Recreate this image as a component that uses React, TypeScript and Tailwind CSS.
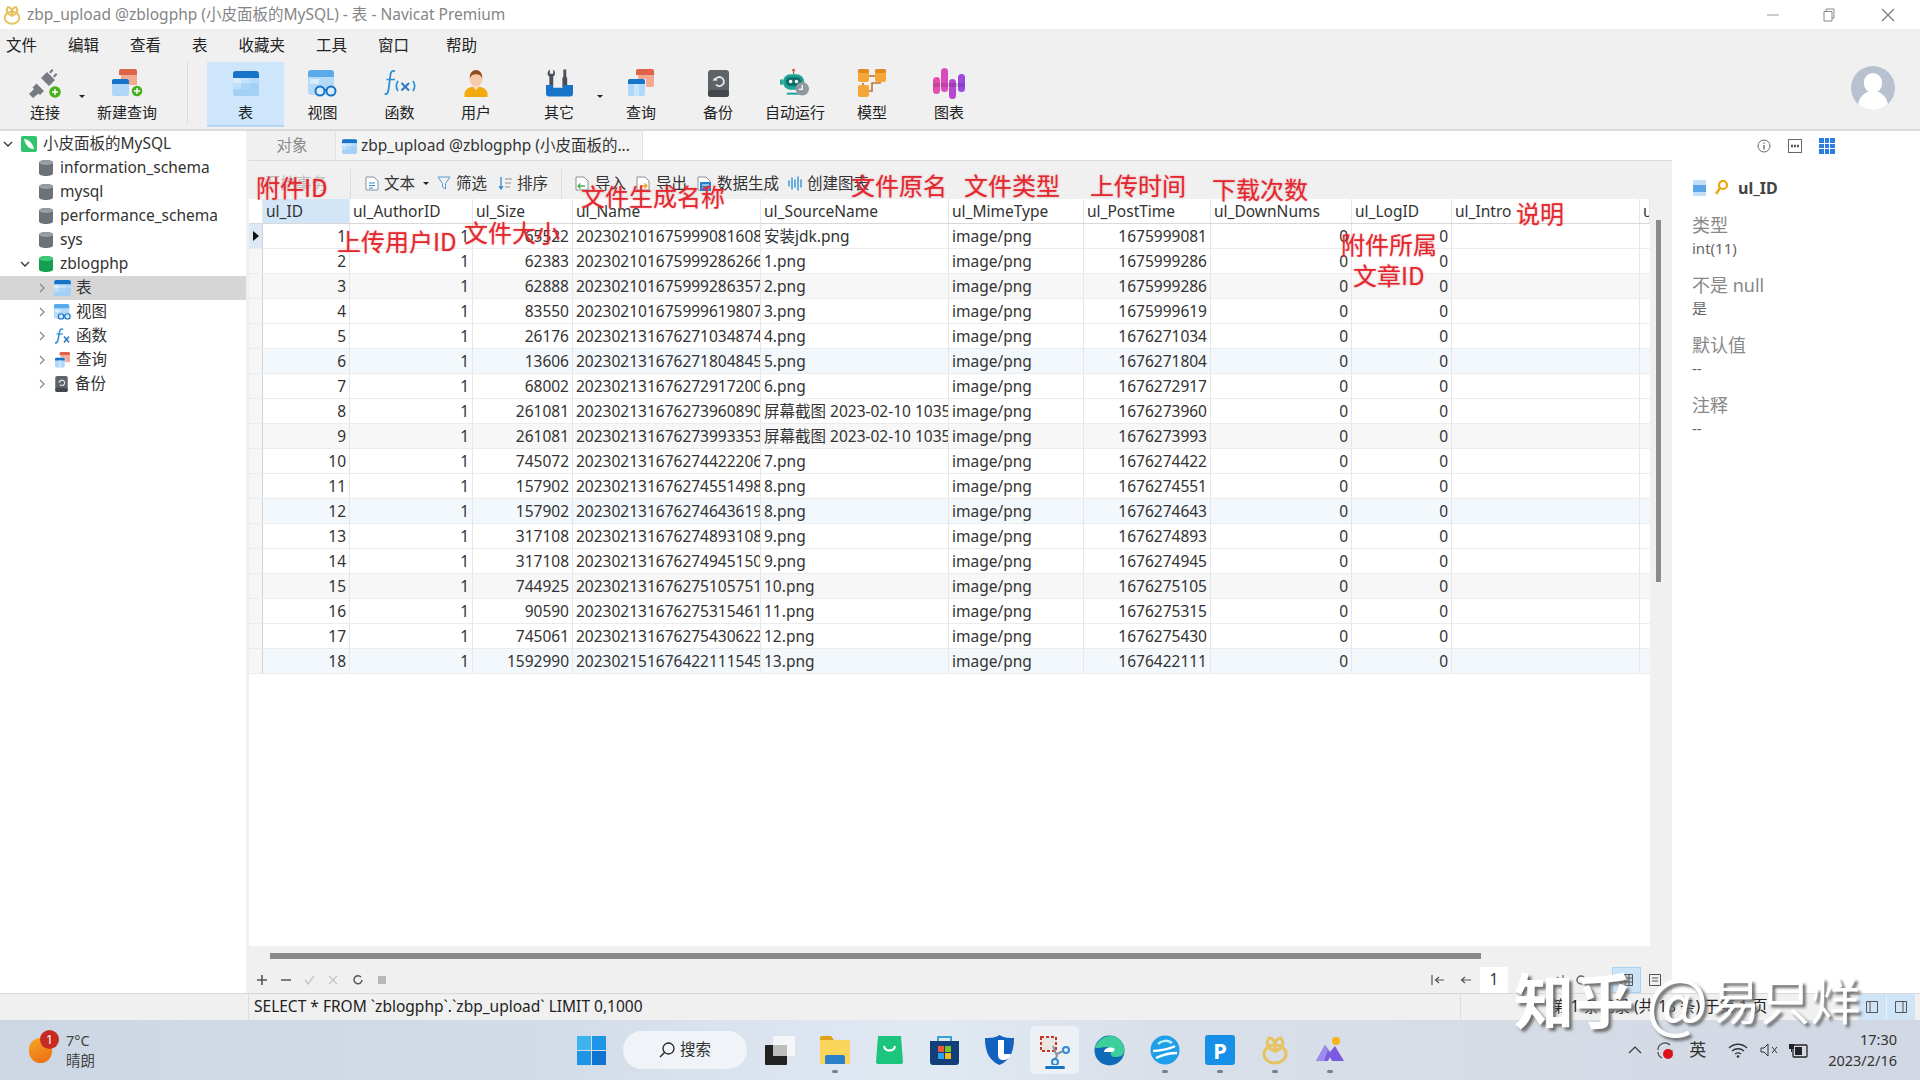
import React from "react";

const sans = "font-['Noto_Sans','Noto_Sans_CJK_SC',sans-serif]";

const Plus = ({ cx, cy, r = 5.5 }: { cx: number; cy: number; r?: number }) => (
  <g>
    <circle cx={cx} cy={cy} r={r} fill="#4caf20" />
    <path d={`M${cx - 3} ${cy}h6M${cx} ${cy - 3}v6`} stroke="#fff" strokeWidth="1.4" />
  </g>
);

const TableIco = ({ className = "w-[26px] h-[25px]" }: { className?: string }) => (
  <svg viewBox="0 0 26 25" className={className}>
    <rect x="0" y="0" width="26" height="25" rx="3" fill="#a9d4f8" />
    <path d="M0 3a3 3 0 0 1 3-3h20a3 3 0 0 1 3 3v4H0z" fill="#1774c9" />
    <rect x="0" y="7" width="8" height="5.5" fill="#d8edfc" />
    <rect x="8" y="7" width="9" height="5.5" fill="#c4e2fa" />
    <rect x="17" y="7" width="9" height="5.5" fill="#b5dbf9" />
    <rect x="0" y="12.5" width="8" height="6" fill="#bfe0fa" />
    <rect x="8" y="12.5" width="9" height="6" fill="#acd6f8" />
    <rect x="17" y="12.5" width="9" height="6" fill="#a2d0f6" />
    <path d="M0 18.5h26V22a3 3 0 0 1-3 3H3a3 3 0 0 1-3-3z" fill="#a2d0f7" />
  </svg>
);

const ViewIco = ({ className = "w-[29px] h-[27px]" }: { className?: string }) => (
  <svg viewBox="0 0 29 27" className={className}>
    <rect x="0" y="0" width="26" height="25" rx="3" fill="#b5daf8" />
    <path d="M0 3a3 3 0 0 1 3-3h20a3 3 0 0 1 3 3v4H0z" fill="#5aa9e9" />
    <rect x="2" y="9" width="9" height="5" fill="#d8edfc" />
    <circle cx="12" cy="21" r="4.5" fill="#d8edfc" stroke="#1774c9" strokeWidth="2" />
    <circle cx="23" cy="21" r="4.5" fill="#d8edfc" stroke="#1774c9" strokeWidth="2" />
    <path d="M16 20h3" stroke="#1774c9" strokeWidth="2" />
  </svg>
);

const QueryIco = ({ className = "w-[26px] h-[28px]" }: { className?: string }) => (
  <svg viewBox="0 0 26 28" className={className}>
    <path d="M8 2a2 2 0 0 1 2-2h14a2 2 0 0 1 2 2v4H8z" fill="#e0624a" />
    <path d="M10 6h16v10a2 2 0 0 1-2 2h-6V10h-8z" fill="#f4a991" />
    <rect x="0" y="10" width="17" height="17" rx="2" fill="#aed7f8" />
    <path d="M0 12a2 2 0 0 1 2-2h13a2 2 0 0 1 2 2v3H0z" fill="#1774c9" />
    <rect x="6" y="15" width="5" height="12" fill="#c7e4fb" />
  </svg>
);

const BackupIco = ({ className = "w-[21px] h-[27px]" }: { className?: string }) => (
  <svg viewBox="0 0 21 27" className={className}>
    <rect width="21" height="27" rx="3" fill="#5e6369" />
    <rect y="20" width="21" height="7" rx="3" fill="#44484d" />
    <path d="M7 10.5a4.5 4.5 0 1 1 1 4" fill="none" stroke="#e8e8e8" strokeWidth="1.8" />
    <path d="M4.5 10.5h5L7 7.5z" fill="#e8e8e8" />
  </svg>
);

const FxIco = () => (
  <svg viewBox="0 0 32 28" className="w-[32px] h-[28px]">
    <path d="M11 2.5c-2.5-1.500-4 0-4.500 3L4.500 21c-.6 3.500-2 4.500-4 4" fill="none" stroke="#2c8fd8" strokeWidth="1.800" />
    <path d="M2.500 10.500H11" stroke="#2c8fd8" strokeWidth="1.500" />
    <path d="M14 12c-2 3-2 7 0 10M29 12c2 3 2 7 0 10" fill="none" stroke="#2c8fd8" strokeWidth="1.700" />
    <path d="M17.500 14l7.500 7.500M25 14l-7.500 7.500" stroke="#2c78c8" strokeWidth="2" />
  </svg>
);

const UserIco = () => (
  <svg viewBox="0 0 24 28" className="w-[24px] h-[27px]">
    <path d="M0 28v-3c0-5 5-8 12-8s12 3 12 8v3z" fill="#f2a90f" />
    <path d="M8 16l4 5 4-5z" fill="#fbe3c4" />
    <ellipse cx="12" cy="9" rx="6.500" ry="8" fill="#f8c9a8" />
    <path d="M5.500 9C5 3 8.500 0 12 0s7 3 6.500 9c-1-3-3-4.500-6.500-4.500S6.500 6 5.500 9z" fill="#8f4a22" />
  </svg>
);

const ToolsIco = () => (
  <svg viewBox="0 0 28 28" className="w-[27px] h-[28px]">
    <path d="M4 0c-3 2-3 6-.5 7.500V19h4V7.500C10 6 10 2 7.500 0v4.500H4z" fill="#4a5058" />
    <path d="M18 0h3v7l1 2v10h-5V9l1-2z" fill="#4a5058" />
    <path d="M0 16h7v3h11v-3h10v9a3 3 0 0 1-3 3H3a3 3 0 0 1-3-3z" fill="#1774c9" />
  </svg>
);

const RobotIco = () => (
  <svg viewBox="0 0 32 30" className="w-[31px] h-[30px]">
    <circle cx="14" cy="1.800" r="1.500" fill="#e0524a" />
    <path d="M14 3v3" stroke="#5a6068" strokeWidth="1.200" />
    <rect x="3" y="6" width="22" height="16" rx="8" fill="#1fa394" />
    <rect x="6" y="9" width="16" height="9" rx="4.500" fill="#0e6f6a" />
    <circle cx="11" cy="13.500" r="1.800" fill="#fff" />
    <circle cx="17" cy="13.500" r="1.800" fill="#fff" />
    <rect x="0" y="11" width="3" height="6" rx="1.500" fill="#1fa394" />
    <path d="M7 25h14v2H7z" fill="#1fa394" />
    <circle cx="23" cy="21" r="7" fill="#8f979f" />
    <path d="M23 17v4.500h-3.500" fill="none" stroke="#fff" strokeWidth="1.300" />
  </svg>
);

const ModelIco = () => (
  <svg viewBox="0 0 28 28" className="w-[28px] h-[28px]">
    <path d="M8 7h11M5 14v6M23 14h-9v8h-5" fill="none" stroke="#b9753a" strokeWidth="1.600" />
    <rect x="0" y="0" width="11" height="13" rx="2" fill="#f5a636" />
    <rect x="17" y="0" width="11" height="13" rx="2" fill="#f5a636" />
    <rect x="0" y="16" width="11" height="12" rx="2" fill="#f5a636" />
    <rect x="0" y="0" width="11" height="4" rx="2" fill="#de8a1e" />
    <rect x="17" y="0" width="11" height="4" rx="2" fill="#de8a1e" />
  </svg>
);

const ChartIco = () => (
  <svg viewBox="0 0 32 31" className="w-[32px] h-[31px]">
    <rect x="0" y="9" width="7" height="17" rx="3.500" fill="#e04fb0" />
    <rect x="8" y="0" width="7" height="24" rx="3.500" fill="#d94bbc" />
    <rect x="16" y="11" width="7" height="20" rx="3.500" fill="#b846cf" />
    <rect x="25" y="6" width="7" height="18" rx="3.500" fill="#9a4ae0" />
    <rect x="0" y="15" width="32" height="4" fill="#000" fillOpacity=".12" />
  </svg>
);

const PlugIco = () => (
  <svg viewBox="0 0 32 30" className="w-[32px] h-[30px]">
    <g fill="#767b82">
      <path d="M0 26l5-5-1.500-1.500 4-4 7.500 7.500-4 4L9.500 25.500 4 30z" />
      <path d="M12 10l6-6 8 8-6 6z" />
      <path d="M20 4l3-3 1.500 1.500-3 3zM24 8l3-3 1.500 1.500-3 3z" />
    </g>
    <Plus cx={26} cy={24} r={5.800} />
  </svg>
);

const NewQueryIco = () => (
  <svg viewBox="0 0 31 28" className="w-[31px] h-[28px]">
    <path d="M7 2a2 2 0 0 1 2-2h14a2 2 0 0 1 2 2v4H7z" fill="#e0624a" />
    <path d="M9 6h16v10h-8V10H9z" fill="#f4a991" />
    <rect x="0" y="10" width="17" height="17" rx="2" fill="#aed7f8" />
    <path d="M0 12a2 2 0 0 1 2-2h13a2 2 0 0 1 2 2v3H0z" fill="#1774c9" />
    <Plus cx={25} cy={22} r={5.300} />
  </svg>
);

type TItem = { label: string; icon: React.ReactNode; cls: string; active?: boolean };

const tools: TItem[] = [
  { label: "连接", icon: <PlugIco />, cls: "ml-[10px] w-[70px]" },
  { label: "新建查询", icon: <NewQueryIco />, cls: "ml-[9px] w-[76px]" },
];
const tools2: TItem[] = [
  { label: "表", icon: <TableIco />, cls: "ml-[19px] w-[77px]", active: true },
  { label: "视图", icon: <ViewIco />, cls: "w-[77px]" },
  { label: "函数", icon: <FxIco />, cls: "w-[77px]" },
  { label: "用户", icon: <UserIco />, cls: "w-[76px]" },
  { label: "其它", icon: <ToolsIco />, cls: "ml-[7px] w-[76px]" },
];
const tools3: TItem[] = [
  { label: "查询", icon: <QueryIco />, cls: "w-[76px]" },
  { label: "备份", icon: <BackupIco />, cls: "ml-[1px] w-[76px]" },
  { label: "自动运行", icon: <RobotIco />, cls: "ml-[1px] w-[76px]" },
  { label: "模型", icon: <ModelIco />, cls: "ml-[1px] w-[76px]" },
  { label: "图表", icon: <ChartIco />, cls: "ml-[1px] w-[76px]" },
];

const Tool = ({ t }: { t: TItem }) => (
  <div className={`${t.cls} h-[65px] flex flex-col items-center shrink-0 ${t.active ? "bg-[#cde6fb] border-b-2 border-[#b5d6f2]" : ""}`}>
    <div className="h-[37px] pt-[5px] flex items-center justify-center">{t.icon}</div>
    <div className="mt-[3px] text-[#222] text-[15px] leading-[20px] whitespace-nowrap">{t.label}</div>
  </div>
);

const Caret = ({ cls }: { cls: string }) => (
  <div className={`${cls} shrink-0 h-[65px] flex items-center justify-center pt-[3px]`}>
    <div className="w-0 h-0 border-l-[3px] border-r-[3px] border-t-[3px] border-l-transparent border-r-transparent border-t-[#222]" />
  </div>
);

const Navicat = ({ className }: { className: string }) => (
  <svg viewBox="0 0 30 30" className={className}>
    <g fill="none" stroke="#e6c35e" strokeWidth="3">
      <ellipse cx="15" cy="19" rx="11" ry="9" />
      <path d="M15 16C8 14 5 9 9 3c4 0 7 4 6 13zM15 16c7-2 10-7 6-13-4 0-7 4-6 13z" />
    </g>
  </svg>
);

type Row = [string, string, string, string, string, string, string, string];
const rows: Row[] = [
  ["1", "65522", "2023021016759990816089", "安装jdk.png", "1675999081", "0", "0", ""],
  ["2", "62383", "2023021016759992862661", "1.png", "1675999286", "0", "0", ""],
  ["3", "62888", "2023021016759992863572", "2.png", "1675999286", "0", "0", ""],
  ["4", "83550", "2023021016759996198073", "3.png", "1675999619", "0", "0", ""],
  ["5", "26176", "2023021316762710348744", "4.png", "1676271034", "0", "0", ""],
  ["6", "13606", "2023021316762718048455", "5.png", "1676271804", "0", "0", ""],
  ["7", "68002", "2023021316762729172006", "6.png", "1676272917", "0", "0", ""],
  ["8", "261081", "2023021316762739608907", "屏幕截图 2023-02-10 103512.png", "1676273960", "0", "0", ""],
  ["9", "261081", "2023021316762739933538", "屏幕截图 2023-02-10 103512.png", "1676273993", "0", "0", ""],
  ["10", "745072", "2023021316762744222069", "7.png", "1676274422", "0", "0", ""],
  ["11", "157902", "2023021316762745514988", "8.png", "1676274551", "0", "0", ""],
  ["12", "157902", "2023021316762746436199", "8.png", "1676274643", "0", "0", ""],
  ["13", "317108", "2023021316762748931089", "9.png", "1676274893", "0", "0", ""],
  ["14", "317108", "2023021316762749451509", "9.png", "1676274945", "0", "0", ""],
  ["15", "744925", "2023021316762751057510", "10.png", "1676275105", "0", "0", ""],
  ["16", "90590", "2023021316762753154611", "11.png", "1676275315", "0", "0", ""],
  ["17", "745061", "2023021316762754306222", "12.png", "1676275430", "0", "0", ""],
  ["18", "1592990", "2023021516764221115453", "13.png", "1676422111", "0", "0", ""],
];

const cell = "shrink-0 overflow-hidden whitespace-nowrap border-r border-[#e6e6e6] leading-[24px] h-full";
const num = "text-right pr-[3px]";
const txt = "pl-[3px]";

const headers: [string, string][] = [
  ["ul_ID", "w-[87px] bg-[#d3e6f7]"],
  ["ul_AuthorID", "w-[123px]"],
  ["ul_Size", "w-[100px]"],
  ["ul_Name", "w-[188px]"],
  ["ul_SourceName", "w-[188px]"],
  ["ul_MimeType", "w-[135px]"],
  ["ul_PostTime", "w-[127px]"],
  ["ul_DownNums", "w-[141px]"],
  ["ul_LogID", "w-[100px]"],
  ["ul_Intro", "w-[188px]"],
  ["ul_", "w-[10px]"],
];

const notes: [string, string][] = [
  ["附件ID", "left-[256px] top-[174px]"],
  ["上传用户ID", "left-[337px] top-[228px]"],
  ["文件大小", "left-[464px] top-[219px]"],
  ["文件生成名称", "left-[581px] top-[183px]"],
  ["文件原名", "left-[851px] top-[172px]"],
  ["文件类型", "left-[964px] top-[172px]"],
  ["上传时间", "left-[1090px] top-[172px]"],
  ["下载次数", "left-[1212px] top-[176px]"],
  ["说明", "left-[1516px] top-[200px]"],
  ["附件所属", "left-[1341px] top-[231px]"],
  ["文章ID", "left-[1353px] top-[262px]"],
];

const Chevron = ({ open, cls }: { open?: boolean; cls: string }) => (
  <svg viewBox="0 0 10 10" className={`${cls} w-[10px] h-[10px] shrink-0`}>
    <path d={open ? "M1 3l4 4 4-4" : "M3 1l4 4-4 4"} fill="none" stroke={open ? "#333" : "#888"} strokeWidth="1.300" />
  </svg>
);

const Db = ({ color }: { color: "g" | "e" }) => (
  <svg viewBox="0 0 14 16" className="w-[14px] h-[16px] shrink-0">
    <path d="M0 2.500C0 1 3 0 7 0s7 1 7 2.500V13.500C14 15 11 16 7 16s-7-1-7-2.500z" fill={color === "g" ? "#6c7278" : "#12a150"} />
    <ellipse cx="7" cy="2.500" rx="7" ry="2.500" fill={color === "g" ? "#999ea3" : "#42c97b"} />
  </svg>
);

const dbRow = "h-6 flex items-center pl-[39px] gap-[7px]";
const childRow = "h-6 flex items-center gap-[5px]";

const SubIcon = ({ kind }: { kind: string }) => {
  const page = <path d="M1 1h8l4 4v9H1z" fill="#fff" stroke="#8a9098" />;
  return (
    <svg viewBox="0 0 14 15" className="w-[14px] h-[15px] shrink-0">
      {kind === "text" && (
        <g>
          {page}
          <path d="M4 7h6M4 9.500h6M4 12h4" stroke="#2c8fd8" />
        </g>
      )}
      {kind === "filter" && <path d="M1 1h12L8.500 7.500V13L5.500 11V7.500z" fill="none" stroke="#5c9ad0" />}
      {kind === "sort" && (
        <g>
          <path d="M3 1v12M1 10l2 3 2-3" fill="none" stroke="#2c8fd8" strokeWidth="1.300" />
          <path d="M7 3h7M7 7h6M7 11h5" stroke="#8a9098" />
        </g>
      )}
      {kind === "in" && (
        <g>
          {page}
          <path d="M10 10H3M5.500 7.500L3 10l2.500 2.500" fill="none" stroke="#4caf50" strokeWidth="1.300" />
        </g>
      )}
      {kind === "out" && (
        <g>
          {page}
          <path d="M4 10h7M8.500 7.500L11 10l-2.500 2.500" fill="none" stroke="#f0a020" strokeWidth="1.300" />
        </g>
      )}
      {kind === "gen" && (
        <g>
          {page}
          <rect x="3" y="6" width="11" height="9" fill="#2b7fd0" />
          <path d="M5 9h7M5 12h7" stroke="#fff" />
        </g>
      )}
      {kind === "chart" && <path d="M1 5v5M4 2v11M7 4v7M10 1v13M13 4v7" stroke="#3a9ad9" strokeWidth="1.500" strokeLinecap="round" />}
    </svg>
  );
};

const Dot = ({ active }: { active?: boolean }) =>
  active ? (
    <span className="absolute bottom-[5px] left-1/2 -translate-x-1/2 w-[20px] h-[3px] rounded-full bg-[#1673c5]" />
  ) : (
    <span className="absolute bottom-[7px] left-1/2 -translate-x-1/2 w-[6px] h-[3px] rounded-full bg-[#77808c]" />
  );

const TaskIcon = ({ cls, dot, children }: { cls: string; dot?: boolean; children: React.ReactNode }) => (
  <div className={`${cls} relative h-full shrink-0 flex items-center justify-center`}>
    {children}
    {dot && <Dot />}
  </div>
);

export default function App() {
  return (
    <div className={`${sans} relative w-[1920px] h-[1080px] overflow-hidden bg-white text-[15.5px] text-[#333] flex flex-col`}>
      {/* title */}
      <div className="h-[29px] flex items-center bg-white shrink-0">
        <Navicat className="ml-[2px] w-[20px] h-[22px]" />
        <span className="ml-[5px] text-[#858585] text-[15.5px] whitespace-nowrap">zbp_upload @zblogphp (小皮面板的MySQL) - 表 - Navicat Premium</span>
        <div className="ml-auto flex items-center">
          <svg viewBox="0 0 12 12" className="w-[12px] h-[12px] mr-[44px]"><path d="M0 6h12" stroke="#999" /></svg>
          <svg viewBox="0 0 12 14" className="w-[12px] h-[14px] mr-[46px]"><path d="M1 3.500h8v9.500H1zM3 3.500V1h8v9H9" fill="none" stroke="#888" /></svg>
          <svg viewBox="0 0 14 14" className="w-[14px] h-[14px] mr-[25px]"><path d="M1 1l12 12M13 1L1 13" stroke="#777" strokeWidth="1.100" /></svg>
        </div>
      </div>
      {/* menu */}
      <div className="h-[31px] pt-[2px] bg-[#f0f0f0] flex items-center pl-[6px] gap-[31px] text-[15.5px] text-[#222] shrink-0">
        <span>文件</span>
        <span>编辑</span>
        <span>查看</span>
        <span>表</span>
        <span>收藏夹</span>
        <span>工具</span>
        <span>窗口</span>
        <span className="ml-[6px]">帮助</span>
      </div>
      {/* ribbon */}
      <div className="h-[71px] pt-[2px] bg-[#f0f0f0] border-b-2 border-[#dadada] flex items-start shrink-0">
        {tools.slice(0, 1).map((t) => <Tool key={t.label} t={t} />)}
        <Caret cls="w-[9px] -ml-[3px] mr-[3px]" />
        <div className="-ml-[9px] flex"><Tool t={tools[1]} /></div>
        <div className="ml-[22px] w-px h-[62px] bg-[#dcdcdc] shrink-0" />
        {tools2.map((t) => <Tool key={t.label} t={t} />)}
        <Caret cls="w-[6px]" />
        {tools3.map((t) => <Tool key={t.label} t={t} />)}
        <div className="ml-auto mr-[25px] mt-[4px] w-[44px] h-[44px] rounded-full bg-[#b7c1cf] overflow-hidden flex flex-col items-center relative">
          <div className="mt-[7px] w-[18px] h-[22px] rounded-full bg-white" />
          <div className="-mt-[2px] w-[30px] h-[20px] rounded-t-full bg-white" />
        </div>
      </div>

      {/* body */}
      <div className="flex-1 min-h-0 flex">
        {/* sidebar */}
        <div className="w-[246px] bg-white text-[#333] pt-[1px] shrink-0">
          <div className="h-6 flex items-center pl-[3px]">
            <Chevron open cls="" />
            <svg viewBox="0 0 16 16" className="ml-[8px] w-[16px] h-[16px]">
              <rect width="16" height="16" rx="2" fill="#2fc36b" />
              <path d="M3 3c4 0 9 4 10 10-5 0-8-3-10-10z" fill="#fff" />
            </svg>
            <span className="ml-[6px]">小皮面板的MySQL</span>
          </div>
          {["information_schema", "mysql", "performance_schema", "sys"].map((n) => (
            <div key={n} className={dbRow}><Db color="g" /><span>{n}</span></div>
          ))}
          <div className="h-6 flex items-center pl-[20px]">
            <Chevron open cls="" />
            <span className="ml-[9px]"><Db color="e" /></span>
            <span className="ml-[7px]">zblogphp</span>
          </div>
          <div className={`${childRow} bg-[#d6d6d6] pl-[37px]`}>
            <Chevron cls="" />
            <span className="ml-[2px] flex"><TableIco className="w-[17px] h-[16px]" /></span>
            <span>表</span>
          </div>
          <div className={`${childRow} pl-[37px]`}>
            <Chevron cls="" />
            <span className="ml-[2px] flex"><ViewIco className="w-[17px] h-[16px]" /></span>
            <span>视图</span>
          </div>
          <div className={`${childRow} pl-[37px]`}>
            <Chevron cls="" />
            <svg viewBox="0 0 17 16" className="ml-[2px] w-[17px] h-[16px]">
              <path d="M9 1.500C7 .5 6 1.500 5.500 4L4 12c-.4 2-1.500 3-3 3" fill="none" stroke="#2c8fd8" strokeWidth="1.500" />
              <path d="M2.500 6H9" stroke="#2c8fd8" strokeWidth="1.200" />
              <path d="M10 8.500l5 6M15 8.500l-5 6" stroke="#2c78c8" strokeWidth="1.500" />
            </svg>
            <span>函数</span>
          </div>
          <div className={`${childRow} pl-[37px]`}>
            <Chevron cls="" />
            <span className="ml-[2px] flex"><QueryIco className="w-[17px] h-[16px]" /></span>
            <span>查询</span>
          </div>
          <div className={`${childRow} pl-[37px]`}>
            <Chevron cls="" />
            <span className="ml-[3px] mr-[2px] flex"><BackupIco className="w-[13px] h-[16px]" /></span>
            <span>备份</span>
          </div>
        </div>

        {/* main */}
        <div className="w-[1426px] shrink-0 bg-[#f0f0f0] flex flex-col pl-[3px]">
          {/* tabs */}
          <div className="h-[30px] bg-white border-b border-[#dcdcdc] flex shrink-0">
            <div className="w-[87px] h-full pt-[1px] bg-[#f0f0f0] text-[#8c8c8c] flex items-center justify-center border-r border-[#e2e2e2]">对象</div>
            <div className="w-[307px] h-full pt-[1px] bg-[#f3f3f3] flex items-center pl-[6px] gap-[4px] whitespace-nowrap border-r border-[#e2e2e2]">
              <TableIco className="w-[15px] h-[15px]" />
              <span>zbp_upload @zblogphp (小皮面板的...</span>
            </div>
          </div>
          {/* subtoolbar */}
          <div className="h-[38px] pt-[7px] flex items-center text-[#333] shrink-0 whitespace-nowrap">
            <div className="w-[101px] pl-[16px] text-[#bdbdbd]">开始事务</div>
            <div className="w-px h-[30px] bg-[#dddddd]" />
            <div className="ml-[14px]"><SubIcon kind="text" /></div><span className="ml-[5px]">文本</span>
            <div className="ml-[8px] w-0 h-0 border-l-[3px] border-r-[3px] border-t-[3px] border-l-transparent border-r-transparent border-t-[#222]" />
            <div className="ml-[8px]"><SubIcon kind="filter" /></div><span className="ml-[5px]">筛选</span>
            <div className="ml-[11px]"><SubIcon kind="sort" /></div><span className="ml-[5px]">排序</span>
            <div className="ml-[13px] w-px h-[30px] bg-[#dddddd]" />
            <div className="ml-[13px]"><SubIcon kind="in" /></div><span className="ml-[6px]">导入</span>
            <div className="ml-[10px]"><SubIcon kind="out" /></div><span className="ml-[6px]">导出</span>
            <div className="ml-[10px]"><SubIcon kind="gen" /></div><span className="ml-[6px]">数据生成</span>
            <div className="ml-[9px]"><SubIcon kind="chart" /></div><span className="ml-[5px]">创建图表</span>
          </div>
          {/* grid + scrollbar */}
          <div className="h-[747px] flex shrink-0">
            <div className="w-[1401px] h-full bg-white overflow-hidden shrink-0">
              <div className="h-6 flex border-b border-[#d9d9d9] box-content">
                <div className="w-[14px] shrink-0 border-r border-[#e6e6e6]" />
                {headers.map(([h, w]) => (
                  <div key={h} className={`${cell} ${w} pl-[3px]`}>{h}</div>
                ))}
              </div>
              {rows.map((r, i) => {
                const tint = (i + 1) % 6 === 0 ? "bg-[#f3f8fc]" : (i + 1) % 6 === 3 ? "bg-[#f7f7f7]" : "bg-white";
                return (
                  <div key={r[0]} className={`h-[25px] flex border-b border-[#ececec] ${tint}`}>
                    <div className={`w-[14px] shrink-0 border-r border-[#d2d2d2] flex items-center justify-center ${i === 0 ? "bg-[#dce9f5]" : "bg-[#f6f6f6]"}`}>
                      {i === 0 && <div className="w-0 h-0 border-t-[5px] border-b-[5px] border-l-[6px] border-t-transparent border-b-transparent border-l-[#111]" />}
                    </div>
                    <div className={`${cell} w-[87px] ${num}`}>{r[0]}</div>
                    <div className={`${cell} w-[123px] ${num}`}>1</div>
                    <div className={`${cell} w-[100px] ${num}`}>{r[1]}</div>
                    <div className={`${cell} w-[188px] ${txt}`}>{r[2]}</div>
                    <div className={`${cell} w-[188px] ${txt}`}>{r[3]}</div>
                    <div className={`${cell} w-[135px] ${txt}`}>image/png</div>
                    <div className={`${cell} w-[127px] ${num}`}>{r[4]}</div>
                    <div className={`${cell} w-[141px] ${num}`}>{r[5]}</div>
                    <div className={`${cell} w-[100px] ${num}`}>{r[6]}</div>
                    <div className={`${cell} w-[188px]`} />
                    <div className="w-[7px] shrink-0" />
                  </div>
                );
              })}
            </div>
            <div className="ml-[6px] mt-[21px] w-[5px] h-[362px] bg-[#8a8a8a] shrink-0" />
          </div>
          {/* h scrollbar */}
          <div className="h-[13px] shrink-0 pl-[21px] pt-[7px]">
            <div className="w-[1211px] h-[6px] bg-[#8a8a8a]" />
          </div>
          {/* action row */}
          <div className="h-[34px] pt-[7px] shrink-0 flex items-center text-[#555] relative">
            <svg viewBox="0 0 140 12" className="ml-[8px] w-[140px] h-[12px]">
              <path d="M0 6h10M5 1v10M24 6h10" stroke="#555" strokeWidth="1.600" />
              <path d="M48 6l3 4 6-8" fill="none" stroke="#c4c4c4" strokeWidth="1.300" />
              <path d="M72 2l8 8M80 2l-8 8" stroke="#c4c4c4" strokeWidth="1.300" />
              <path d="M104 3a4 4 0 1 0 1 3" fill="none" stroke="#555" strokeWidth="1.500" />
              <rect x="121" y="2" width="8" height="8" fill="#b8b8b8" />
            </svg>
            <div className="ml-auto flex items-center h-full pr-[11px]">
              <svg viewBox="0 0 46 12" className="w-[46px] h-[12px] mr-[3px]">
                <path d="M1 1v10M13 6H5M8 3L4.500 6 8 9M40 6h-9M34 3l-3.500 3L34 9" fill="none" stroke="#555" strokeWidth="1.200" />
              </svg>
              <div className="w-[28px] h-[26px] bg-white flex items-center justify-center text-[#333]">1</div>
              <svg viewBox="0 0 76 12" className="ml-[13px] w-[76px] h-[12px]">
                <path d="M0 6h9M6 3l3.500 3L6 9M31 6h8M36 3l3.500 3L36 9M42 1v10" fill="none" stroke="#666" strokeWidth="1.200" />
                <circle cx="60" cy="6" r="4" fill="none" stroke="#666" strokeWidth="1.500" />
              </svg>
              <div className="ml-[15px] w-[29px] h-[26px] bg-[#cce4f8] border border-[#a9d1f0] flex items-center justify-center">
                <svg viewBox="0 0 12 12" className="w-[12px] h-[12px]"><path d="M.5.5h11v11H.5zM.5 4h11M.5 8h11M4 .5v11M8 .5v11" fill="none" stroke="#555" /></svg>
              </div>
              <svg viewBox="0 0 12 12" className="ml-[8px] w-[12px] h-[12px]"><path d="M.5.5h11v11H.5zM3 4h6M3 7h6" fill="none" stroke="#555" /></svg>
            </div>
          </div>
        </div>

        {/* right panel */}
        <div className="flex-1 bg-white relative pl-[20px]">
          <div className="h-[30px] flex items-center pl-[65px] gap-[17px]">
            <svg viewBox="0 0 14 14" className="w-[14px] h-[14px]"><circle cx="7" cy="7" r="6" fill="none" stroke="#666" /><path d="M7 6v4.500M7 3.500v1.200" stroke="#555" strokeWidth="1.200" /></svg>
            <svg viewBox="0 0 14 14" className="w-[14px] h-[14px]"><rect x=".5" y=".5" width="13" height="13" fill="none" stroke="#666" /><path d="M3 7h8" stroke="#555" strokeWidth="2.500" strokeDasharray="2 1" /></svg>
            <svg viewBox="0 0 16 16" className="w-[16px] h-[16px]"><rect width="16" height="16" fill="#2b7fe0" /><path d="M5.500 0v16M10.500 0v16M0 5.500h16M0 10.500h16" stroke="#fff" /></svg>
          </div>
          <div className="mt-[15px] h-[24px] flex items-center">
            <svg viewBox="0 0 14 16" className="ml-[1px] w-[14px] h-[16px]"><rect width="13" height="16" fill="#c4dff5" /><rect width="13" height="7" y="5" fill="#5aa6e6" /></svg>
            <svg viewBox="0 0 14 16" className="ml-[7px] w-[14px] h-[16px]"><circle cx="9" cy="5" r="4" fill="none" stroke="#eaa512" strokeWidth="2.200" /><path d="M6 8L2 14" stroke="#eaa512" strokeWidth="2.400" /></svg>
            <span className="ml-[10px] font-bold text-[#444] text-[16px]">ul_ID</span>
          </div>
          <div className="mt-[13px] text-[18px] leading-[24px] text-[#888]">类型</div>
          <div className="text-[15px] leading-[22px] text-[#666]">int(11)</div>
          <div className="mt-[14px] text-[18px] leading-[24px] text-[#888]">不是 null</div>
          <div className="text-[15px] leading-[22px] text-[#666]">是</div>
          <div className="mt-[14px] text-[18px] leading-[24px] text-[#888]">默认值</div>
          <div className="text-[15px] leading-[22px] text-[#666]">--</div>
          <div className="mt-[14px] text-[18px] leading-[24px] text-[#888]">注释</div>
          <div className="text-[15px] leading-[22px] text-[#666]">--</div>
        </div>
      </div>

      {/* status */}
      <div className="h-[27px] bg-[#f0f0f0] border-t border-[#d8d8d8] flex items-center shrink-0 whitespace-nowrap text-[#222]">
        <div className="w-[249px] h-full border-r border-[#dedede] shrink-0" />
        <div className="w-[1212px] pl-[5px] h-full border-r border-[#dedede] flex items-center shrink-0">SELECT * FROM `zblogphp`.`zbp_upload` LIMIT 0,1000</div>
        <div className="pl-[90px]">第 1 条记录 (共 18 条) 于第 1 页</div>
        <div className="ml-auto flex h-full mr-[5px] gap-[1px]">
          <div className="w-[28px] h-full bg-[#cfe4f6] flex items-center justify-center">
            <svg viewBox="0 0 12 12" className="w-[12px] h-[12px]"><path d="M.5.5h11v11H.5zM4 .5v11" fill="none" stroke="#555" /></svg>
          </div>
          <div className="w-[28px] h-full bg-[#cfe4f6] flex items-center justify-center">
            <svg viewBox="0 0 12 12" className="w-[12px] h-[12px]"><path d="M.5.5h11v11H.5zM8 .5v11" fill="none" stroke="#555" /></svg>
          </div>
        </div>
      </div>

      {/* taskbar */}
      <div className="h-[60px] shrink-0 flex items-center bg-[linear-gradient(90deg,#cdd7e3_0%,#d2dce8_28%,#e1e9f3_48%,#d9e0ea_60%,#d2d8e3_100%)]">
        <div className="w-[577px] shrink-0 flex items-center">
          <div className="relative ml-[29px] w-[23px] h-[25px] rounded-full bg-[linear-gradient(160deg,#f5a623,#ee6c12)]">
            <div className="absolute -top-[8px] left-[11px] w-[19px] h-[19px] rounded-full bg-[#c62a22] text-white text-[12.5px] leading-[19px] text-center">1</div>
          </div>
          <div className="ml-[14px] text-[14.5px] leading-[20px] text-[#444]">
            <div>7°C</div>
            <div>晴朗</div>
          </div>
        </div>
        <TaskIcon cls="w-[29px]">
          <svg viewBox="0 0 29 29" className="w-[29px] h-[29px]">
            <rect width="14" height="14" fill="#3cb2ee" />
            <rect x="15" width="14" height="14" fill="#1f95e5" />
            <rect y="15" width="14" height="14" fill="#1f95e5" />
            <rect x="15" y="15" width="14" height="14" fill="#0f74cf" />
          </svg>
        </TaskIcon>
        <div className="ml-[17px] w-[124px] h-[38px] shrink-0 rounded-full bg-[#f0f4f9] flex items-center justify-center gap-[5px] text-[#333]">
          <svg viewBox="0 0 16 16" className="w-[16px] h-[16px]"><circle cx="9.500" cy="6.500" r="5.500" fill="none" stroke="#222" strokeWidth="1.300" /><path d="M5.500 10.500L1 15" stroke="#222" strokeWidth="1.500" /></svg>
          <span>搜索</span>
        </div>
        <TaskIcon cls="ml-[18px] w-[30px]">
          <svg viewBox="0 0 30 29" className="w-[30px] h-[29px]">
            <rect x="0" y="9" width="22" height="20" rx="1" fill="#222" />
            <rect x="8" y="0" width="22" height="20" rx="1" fill="#f4f6f8" />
            <rect x="8" y="9" width="14" height="11" fill="#bdbdbd" />
          </svg>
        </TaskIcon>
        <TaskIcon cls="ml-[25px] w-[30px]" dot>
          <svg viewBox="0 0 30 28" className="w-[30px] h-[28px]">
            <path d="M0 2a2 2 0 0 1 2-2h9l3 4H0z" fill="#dba311" />
            <path d="M0 4h30v24H0z" fill="#fbd65a" />
            <path d="M5 21a2 2 0 0 1 2-2h16a2 2 0 0 1 2 2v7H5z" fill="#2c7fc9" />
          </svg>
        </TaskIcon>
        <TaskIcon cls="ml-[26px] w-[27px]">
          <svg viewBox="0 0 27 28" className="w-[27px] h-[28px]">
            <path d="M2 0h23l2 26a2 2 0 0 1-2 2H2a2 2 0 0 1-2-2z" fill="#1dc47c" />
            <path d="M8 10c1 6 10 6 11 0" fill="none" stroke="#fff" strokeWidth="2" />
          </svg>
        </TaskIcon>
        <TaskIcon cls="ml-[26px] w-[31px]">
          <svg viewBox="0 0 31 30" className="w-[31px] h-[30px]">
            <path d="M9 6V2h13v4" fill="none" stroke="#3aa0d8" strokeWidth="2" />
            <path d="M1 6h29v21a3 3 0 0 1-3 3H4a3 3 0 0 1-3-3z" fill="#123f7a" />
            <rect x="9" y="11" width="6" height="6" fill="#f05a3a" />
            <rect x="16" y="11" width="6" height="6" fill="#7cc41f" />
            <rect x="9" y="18" width="6" height="6" fill="#2aa0ee" />
            <rect x="16" y="18" width="6" height="6" fill="#f4bc12" />
          </svg>
        </TaskIcon>
        <TaskIcon cls="ml-[25px] w-[29px]">
          <svg viewBox="0 0 29 30" className="w-[29px] h-[30px]">
            <path d="M14.500 0C19 3 24 3 29 3c0 12-3 22-14.500 27C3 25 0 15 0 3c5 0 10 0 14.500-3z" fill="#1260c0" />
            <path d="M13 5h6v14h7c-1 4-4 6-8 6-3 0-5-2-5-5z" fill="#fff" />
          </svg>
        </TaskIcon>
        <div className="ml-[16px] w-[49px] h-[48px] shrink-0 rounded-[5px] bg-[#edf1f6] flex items-center justify-center relative">
          <svg viewBox="0 0 30 29" className="w-[30px] h-[29px]">
            <rect x="1" y="1" width="15" height="14" fill="#ece5e2" stroke="#c5352a" strokeWidth="2" strokeDasharray="3 2" />
            <path d="M13 10l4 10-3 4" fill="none" stroke="#8a9098" strokeWidth="2" />
            <circle cx="26" cy="14" r="3" fill="none" stroke="#2a8ad8" strokeWidth="2" />
            <circle cx="15" cy="26" r="3" fill="none" stroke="#2a8ad8" strokeWidth="2" />
            <path d="M23 15l-6 3" stroke="#8a9098" strokeWidth="2" />
          </svg>
          <Dot active />
        </div>
        <TaskIcon cls="ml-[15px] w-[31px]">
          <svg viewBox="0 0 31 31" className="w-[31px] h-[31px]">
            <circle cx="15.500" cy="15.500" r="15" fill="#0f6ab8" />
            <path d="M1 13C4 3 14-1 22 2c6 3 9 9 8 15-1 4-4 5-9 5-4 0-5-3-4-5 1-3-1-5-5-5C7 12 3 14 1 13z" fill="#3ccf9a" />
            <path d="M10 17c0-4 7-6 11-3-1-1 0 2-2 3z" fill="#fff" />
          </svg>
        </TaskIcon>
        <TaskIcon cls="ml-[25px] w-[30px]" dot>
          <svg viewBox="0 0 30 30" className="w-[30px] h-[30px]">
            <circle cx="15" cy="15" r="14.500" fill="#1f9fe8" />
            <path d="M3 16c5 0 17-2 22-5M6 23c6-3 14-5 21-5" fill="none" stroke="#fff" strokeWidth="2.500" />
            <path d="M8 9c4-4 10-4 14-1" fill="none" stroke="#bff2f8" strokeWidth="2.500" />
          </svg>
        </TaskIcon>
        <TaskIcon cls="ml-[25px] w-[30px]" dot>
          <div className="w-[30px] h-[30px] rounded-[3px] bg-[#1590e6] text-white text-[22px] font-bold leading-[30px] text-center">P</div>
        </TaskIcon>
        <TaskIcon cls="ml-[25px] w-[30px]" dot>
          <Navicat className="w-[30px] h-[30px]" />
        </TaskIcon>
        <TaskIcon cls="ml-[25px] w-[30px]" dot>
          <svg viewBox="0 0 30 30" className="w-[30px] h-[30px]">
            <circle cx="21" cy="6" r="4" fill="#f4b41a" />
            <path d="M1 26L10 10l5 7 5-6 9 15H17l-2-4-2 4z" fill="#7a5be0" />
            <path d="M1 26l9-16 3 5-4 11z" fill="#9d8bee" />
          </svg>
        </TaskIcon>
        <div className="ml-auto flex items-center h-full text-[#333]">
          <svg viewBox="0 0 14 8" className="w-[14px] h-[8px]"><path d="M1 7l6-6 6 6" fill="none" stroke="#333" strokeWidth="1.100" /></svg>
          <svg viewBox="0 0 20 20" className="ml-[13px] w-[20px] h-[20px]">
            <path d="M3 10a7 7 0 0 1 12-5M17 10c0 2-1 4-2 5M3 12c0 3 2 5 4 6" fill="none" stroke="#444" strokeWidth="1.200" />
            <circle cx="13" cy="14" r="5" fill="#e0101a" />
          </svg>
          <span className="ml-[14px] text-[17px]">英</span>
          <svg viewBox="0 0 20 16" className="ml-[22px] w-[20px] h-[16px]">
            <path d="M1 6c5-5 13-5 18 0M4 9c3.500-3 8.500-3 12 0M7 12c2-1.500 4-1.500 6 0" fill="none" stroke="#333" strokeWidth="1.300" />
            <circle cx="10" cy="14.500" r="1.300" fill="#333" />
          </svg>
          <svg viewBox="0 0 20 16" className="ml-[12px] w-[20px] h-[16px]">
            <path d="M1 6h3l4-4v12l-4-4H1z" fill="none" stroke="#333" />
            <path d="M12 5l5 6M17 5l-5 6" stroke="#333" />
          </svg>
          <svg viewBox="0 0 20 18" className="ml-[8px] w-[20px] h-[18px]">
            <rect x="5" y="4" width="14" height="12" rx="1" fill="none" stroke="#222" strokeWidth="1.300" />
            <rect x="7" y="6" width="7" height="8" fill="#222" />
            <path d="M1 3h5v5H4v3H3V8H1z" fill="#222" />
          </svg>
          <div className="ml-[20px] mr-[23px] text-right text-[14.5px] leading-[21px] text-[#333]">
            <div>17:30</div>
            <div>2023/2/16</div>
          </div>
        </div>
      </div>

      {/* annotations */}
      {notes.map(([t, c]) => (
        <div key={t} className={`absolute ${c} text-[24px] leading-[26px] text-[#e3272f] whitespace-nowrap font-['Noto_Sans_CJK_SC',sans-serif] [text-shadow:0_0_2px_rgba(227,39,47,0.45)]`}>{t}</div>
      ))}

      {/* watermark */}
      <div className="absolute left-[1514px] top-[964px] flex items-center h-[68px] whitespace-nowrap font-['Noto_Sans_CJK_SC',sans-serif] font-bold text-white [text-shadow:3px_3px_3px_#6f6f6f]">
        <span className="text-[60px] leading-[68px]">知乎</span>
        <span className="ml-[12px] text-[66px] leading-[68px] font-normal">@</span>
        <span className="ml-[2px] text-[50px] leading-[68px] font-normal">易只烊</span>
      </div>
    </div>
  );
}
